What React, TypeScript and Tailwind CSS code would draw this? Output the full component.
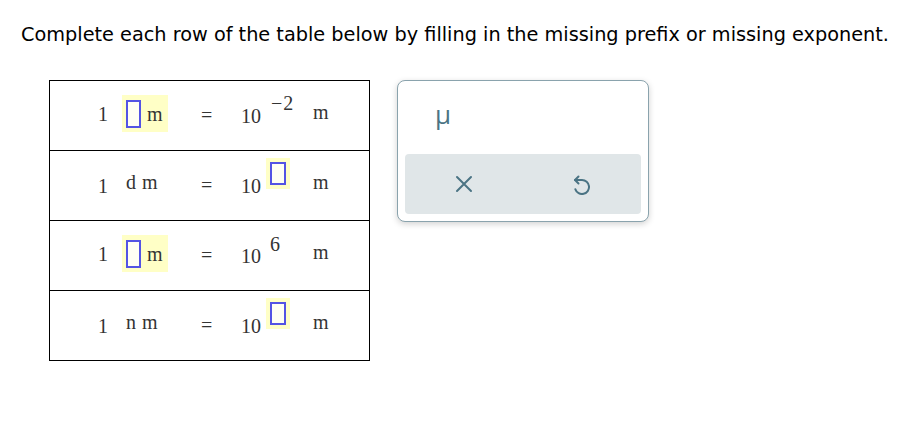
import React from 'react';

const serif = { fontFamily: '"Liberation Serif", "Times New Roman", serif' };

const InputBox = ({ w, h }: { w: number; h: number }) => (
  <span
    className="block border-2 border-[#5454e4] bg-[#fffff4]"
    style={{ width: w, height: h }}
  />
);

interface RowProps {
  prefix: string | null;
  exponent: string | null;
}

const Row: React.FC<RowProps> = ({ prefix, exponent }) => (
  <div className="flex h-[69px] items-start pl-[48px] text-[20px] leading-[20px] text-[#333]">
    <div className={`w-[24px] ${prefix === null ? 'mt-[23px]' : 'mt-[25px]'}`}>1</div>
    <div className="w-[79px]">
      {prefix === null ? (
        <div className="mt-[14px] flex h-[37px] w-[46px] items-center bg-[#ffffc6] pl-[4px]">
          <InputBox w={15} h={28} />
          <span className="ml-[6px]">m</span>
        </div>
      ) : (
        <div className="mt-[21px] pl-[4px]">
          {prefix}
          <span className="ml-[6px]">m</span>
        </div>
      )}
    </div>
    <div className="mt-[24px] w-[40px]">=</div>
    <div className="mt-[25px] w-[25px]">10</div>
    <div className="w-[47px]">
      {exponent === null ? (
        <div className="mt-[7px] flex h-[31px] w-[24px] items-center justify-center bg-[#ffffc6]">
          <InputBox w={16} h={23} />
        </div>
      ) : exponent === '6' ? (
        <div className="mt-[13px] pl-[4px]">6</div>
      ) : (
        <div className="mt-[12px] flex pl-[5px]">
          <span>−</span>
          <span className="ml-[1px]">2</span>
        </div>
      )}
    </div>
    <div className="mt-[21px]">m</div>
  </div>
);

const UndoIcon = () => (
  <svg width="22" height="22" viewBox="0 0 22 22" fill="none" stroke="#4b7484" strokeWidth="2" strokeLinecap="round" strokeLinejoin="round">
    <path d="M4 7h7a7 7 0 1 1 -6.6 9.3" />
    <path d="M7.5 3.5L4 7l3.5 3.5" />
  </svg>
);

export default function App() {
  return (
    <div className="min-h-screen bg-white" style={{ fontFamily: '"DejaVu Sans", Verdana, sans-serif' }}>
      <p className="pl-[21px] pt-[24px] text-[19.3px] leading-[22px] text-black">
        Complete each row of the table below by filling in the missing prefix or missing exponent.
      </p>
      <div className="ml-[49px] mt-[34px] flex items-start gap-[27px]">
        <div className="w-[321px] border border-black" style={serif}>
          <Row prefix={null} exponent="−2" />
          <div className="border-t border-black">
            <Row prefix="d" exponent={null} />
          </div>
          <div className="border-t border-black">
            <Row prefix={null} exponent="6" />
          </div>
          <div className="border-t border-black">
            <Row prefix="n" exponent={null} />
          </div>
        </div>
        <div className="flex h-[142px] w-[252px] flex-col rounded-[8px] border border-[#8aa3ad] bg-white shadow-[0_2px_6px_rgba(0,0,0,0.18)]">
          <div className="flex h-[73px] items-start pl-[37px] pt-[20px]">
            <span
              className="text-[26px] leading-[26px] text-[#4b7484]"
              style={{ fontFamily: '"Open Sans", "Noto Sans", sans-serif' }}
            >
              μ
            </span>
          </div>
          <div className="mx-[7px] grid h-[60px] grid-cols-2 rounded-[4px] bg-[#e0e6e8]">
            <div className="flex items-center justify-center">
              <svg width="18" height="18" viewBox="0 0 18 18" fill="none" stroke="#4b7484" strokeWidth="2" strokeLinecap="round">
                <path d="M2 2l14 14M16 2L2 16" />
              </svg>
            </div>
            <div className="flex items-center justify-center">
              <UndoIcon />
            </div>
          </div>
        </div>
      </div>
    </div>
  );
}
